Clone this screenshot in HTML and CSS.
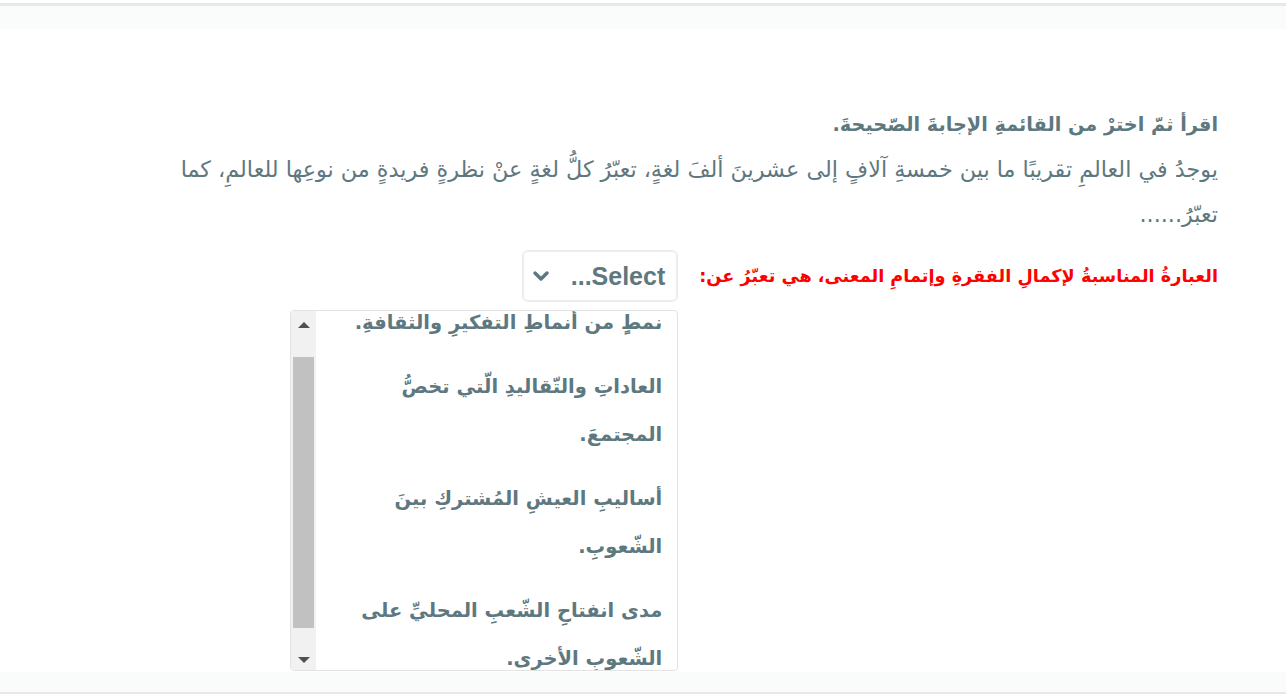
FILE: index.html
```html
<!DOCTYPE html>
<html lang="ar" dir="rtl">
<head>
    <meta charset="UTF-8">
    <meta name="viewport" content="width=device-width, initial-scale=1.0">
    <title>سؤال</title>
    <link rel="stylesheet" href="styles.css">
</head>
<body>
    <div class="top-bar"></div>

    <div class="page">
        <div class="question">
            <h3 class="instruction">اقرأ ثمّ اخترْ من القائمةِ الإجابةَ الصّحيحةَ.</h3>
            <p class="passage">يوجدُ في العالمِ تقريبًا ما بين خمسةِ آلافٍ إلى عشرينَ ألفَ لغةٍ، تعبّرُ كلُّ لغةٍ عنْ نظرةٍ فريدةٍ من نوعِها للعالمِ، كما تعبّرُ......</p>

            <div class="answer-row">
                <span class="prompt">العبارةُ المناسبةُ لإكمالِ الفقرةِ وإتمامِ المعنى، هي تعبّرُ عن:</span>
                <div class="dropdown">
                    <div class="select-box">
                        <span class="select-text">Select...</span>
                        <svg class="chevron" width="18" height="12" viewBox="0 0 18 12">
                            <path d="M3 3 L9 9 L15 3" fill="none" stroke="#5e7880" stroke-width="3.5" stroke-linecap="round" stroke-linejoin="round"/>
                        </svg>
                    </div>
                    <div class="listbox">
                        <div class="options">
                            <div class="option">نمطٍ من أنماطِ التفكيرِ والثقافةِ.</div>
                            <div class="option">العاداتِ والتّقاليدِ الّتي تخصُّ المجتمعَ.</div>
                            <div class="option">أساليبِ العيشِ المُشتركِ بينَ الشّعوبِ.</div>
                            <div class="option">مدى انفتاحِ الشّعبِ المحليِّ على الشّعوبِ الأخرى.</div>
                        </div>
                        <div class="scrollbar">
                            <span class="arrow up"></span>
                            <div class="track"><div class="thumb"></div></div>
                            <span class="arrow down"></span>
                        </div>
                    </div>
                </div>
            </div>
        </div>
    </div>

    <div class="bottom-bar"></div>
</body>
</html>
```

FILE: styles.css
```css
:root {
    --text-color: #5e7880;
    --line-grey: #e8e8e8;
    --band-bg: #fafcfb;
}

body {
    margin: 0;
    height: 694px;
    display: flex;
    flex-direction: column;
    font-family: 'DejaVu Sans', sans-serif;
    color: var(--text-color);
    background-color: #fff;
    overflow: hidden;
}

.top-bar {
    margin-top: 3px;
    height: 23px;
    border-top: 3px solid var(--line-grey);
    background-color: var(--band-bg);
}

.page {
    flex: 1;
    padding: 73px 68px 0 170px;
}

.instruction {
    margin: 0;
    font-size: 19.3px;
    font-weight: bold;
    line-height: 45px;
}

.passage {
    margin: 0;
    font-size: 22.3px;
    line-height: 45px;
}

.answer-row {
    display: flex;
    align-items: center;
    gap: 21px;
    margin-top: 13px;
}

.prompt {
    color: #ff0000;
    font-size: 17.7px;
    font-weight: bold;
}

.dropdown {
    position: relative;
}

.select-box {
    width: 156px;
    height: 52px;
    box-sizing: border-box;
    border: 2px solid #ececec;
    border-radius: 6px;
    display: flex;
    align-items: center;
    justify-content: space-between;
    padding: 0 11px 0 8px;
}

.select-text {
    font-family: 'Liberation Sans', Arial, sans-serif;
    font-size: 25px;
    font-weight: bold;
    color: var(--text-color);
}

.listbox {
    position: absolute;
    top: 60px;
    right: 0;
    width: 388px;
    height: 361px;
    box-sizing: border-box;
    border: 1px solid #e2e2e2;
    border-radius: 4px;
    background-color: #fff;
    display: flex;
    overflow: hidden;
}

.options {
    flex: 1;
    padding: 0 15px 0 12px;
    margin-top: -12px;
}

.option {
    font-size: 19.5px;
    font-weight: bold;
    line-height: 48px;
    margin-bottom: 16px;
}

.scrollbar {
    width: 25px;
    background-color: #f1f1f1;
    display: flex;
    flex-direction: column;
    align-items: center;
}

.track {
    flex: 1;
    width: 100%;
    padding: 0 2px;
    box-sizing: border-box;
}

.thumb {
    margin-top: 29px;
    height: 271px;
    background-color: #c1c1c1;
}

.arrow {
    width: 0;
    height: 0;
    border-left: 6px solid transparent;
    border-right: 6px solid transparent;
}

.arrow.up {
    margin: 11px 0 0;
    border-bottom: 6px solid #505050;
}

.arrow.down {
    margin: 0 0 7px;
    border-top: 6px solid #505050;
}

.bottom-bar {
    height: 20px;
    border-bottom: 2px solid var(--line-grey);
    background-color: var(--band-bg);
}
```
